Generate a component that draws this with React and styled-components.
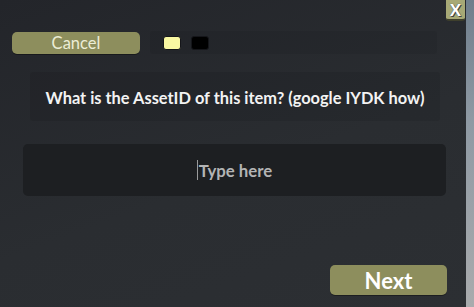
import React from "react";
import styled, { createGlobalStyle } from "styled-components";

const Global = createGlobalStyle`
  html, body { margin: 0; padding: 0; background: #2a2c30; }
  body { font-family: Lato, "Liberation Sans", sans-serif; }
  #root { width: 474px; height: 307px; overflow: hidden; }
`;

const Page = styled.div`
  display: flex;
  width: 474px;
  height: 307px;
`;

const Panel = styled.div`
  position: relative;
  width: 466px;
  height: 307px;
  display: flex;
  flex-direction: column;
  background: linear-gradient(160deg, #23252a 0%, #2a2d31 55%, #2c2f33 100%);
`;

const EdgeStrip = styled.div`
  flex: 1;
  background: linear-gradient(180deg, #6f7e8c 0%, #8f9aa4 40%, #a9abad 100%);
`;

const CloseButton = styled.div`
  position: absolute;
  top: 0;
  right: 1px;
  width: 19px;
  height: 21px;
  box-sizing: border-box;
  background: #a7a976;
  border-radius: 0 0 3px 3px;
  border-bottom: 2px solid #3e3f2c;
  display: flex;
  align-items: center;
  justify-content: center;
  color: #ffffff;
  font-weight: 900;
  font-size: 16px;
  text-shadow: 0 0 1px #333, 1px 1px 0 #444;
`;

const TopRow = styled.div`
  display: flex;
  align-items: center;
  margin-top: 31px;
  margin-left: 12px;
  gap: 10px;
  height: 23px;
`;

const OliveButton = styled.div`
  display: flex;
  align-items: center;
  justify-content: center;
  box-sizing: border-box;
  width: ${(p) => p.$w}px;
  height: ${(p) => p.$h}px;
  background: #8d8e5d;
  border-radius: 5px;
  color: ${(p) => (p.$bold ? "#ffffff" : "#ecedd6")};
  font-size: ${(p) => p.$size}px;
  font-weight: ${(p) => (p.$bold ? 700 : 400)};
  box-shadow: 0 1px 0 rgba(0, 0, 0, 0.35);
`;

const SwatchBar = styled.div`
  display: flex;
  align-items: center;
  gap: 10px;
  width: 287px;
  height: 23px;
  box-sizing: border-box;
  padding-left: 13px;
  background: rgba(0, 0, 0, 0.06);
  border-radius: 3px;
`;

const Swatch = styled.div`
  width: 18px;
  height: 14px;
  box-sizing: border-box;
  border-radius: 3px;
  background: ${(p) => p.$color};
  border: 1px solid #15161a;
`;

const QuestionBox = styled.div`
  margin-top: 18px;
  margin-left: 30px;
  width: 410px;
  height: 49px;
  box-sizing: border-box;
  padding-top: 2px;
  display: flex;
  align-items: center;
  justify-content: center;
  background: rgba(0, 0, 0, 0.08);
  border-radius: 3px;
  color: #f3f3f3;
  font-weight: 700;
  font-size: 16.4px;
`;

const InputBox = styled.div`
  margin-top: 23px;
  margin-left: 23px;
  width: 423px;
  height: 52px;
  display: flex;
  align-items: center;
  justify-content: center;
  background: #1d1f22;
  border-radius: 5px;
  color: #b3b4b5;
  font-weight: 700;
  font-size: 16.8px;
`;

const Caret = styled.span`
  display: inline-block;
  width: 1px;
  height: 20px;
  background: #9a9b9c;
  margin-right: 1px;
`;

const Footer = styled.div`
  margin-top: auto;
  margin-bottom: 12px;
  margin-right: 19px;
  display: flex;
  justify-content: flex-end;
`;

export default function App() {
  return (
    <>
      <Global />
      <Page>
        <Panel>
          <CloseButton>X</CloseButton>
          <TopRow>
            <OliveButton $w={128} $h={22} $size={16.5}>Cancel</OliveButton>
            <SwatchBar>
              <Swatch $color="#f9f8a2" />
              <Swatch $color="#000000" />
            </SwatchBar>
          </TopRow>
          <QuestionBox>What is the AssetID of this item? (google IYDK how)</QuestionBox>
          <InputBox>
            <Caret />
            Type here
          </InputBox>
          <Footer>
            <OliveButton $w={117} $h={30} $size={22} $bold>Next</OliveButton>
          </Footer>
        </Panel>
        <EdgeStrip />
      </Page>
    </>
  );
}
